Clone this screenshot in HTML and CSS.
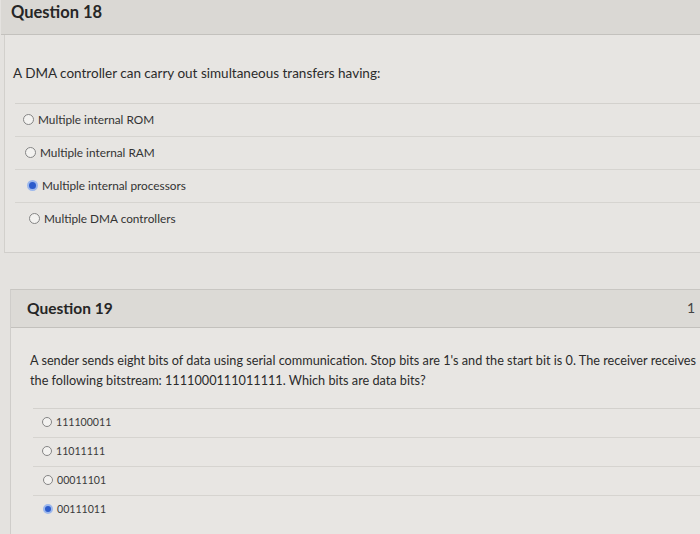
FILE: index.html
```html
<!DOCTYPE html>
<html>
<head>
<meta charset="utf-8">
<link rel="stylesheet" href="styles.css">
</head>
<body>
<div class="page">
  <section class="q q18">
    <div class="q-head"><h2 class="q-title">Question 18</h2></div>
    <div class="q-body">
      <p class="q-text">A DMA controller can carry out simultaneous transfers having:</p>
      <ul class="answers a18">
        <li class="ans"><span class="radio"></span><span>Multiple internal ROM</span></li>
        <li class="ans shift1"><span class="radio"></span><span>Multiple internal RAM</span></li>
        <li class="ans shift2"><span class="radio on"></span><span>Multiple internal processors</span></li>
        <li class="ans shift3"><span class="radio"></span><span>Multiple DMA controllers</span></li>
      </ul>
    </div>
  </section>

  <section class="q q19">
    <div class="q-head head19"><h2 class="q-title">Question 19</h2><span class="pts">1</span></div>
    <div class="q-body body19">
      <p class="q-text t19">A sender sends eight bits of data using serial communication. Stop bits are 1's and the start bit is 0. The receiver receives<br>the following bitstream: 1111000111011111. Which bits are data bits?</p>
      <ul class="answers a19">
        <li class="ans s"><span class="radio sm"></span><span>111100011</span></li>
        <li class="ans s"><span class="radio sm"></span><span>11011111</span></li>
        <li class="ans s shift1"><span class="radio sm"></span><span>00011101</span></li>
        <li class="ans s shift1"><span class="radio sm on"></span><span>00111011</span></li>
      </ul>
    </div>
  </section>
</div>
</body>
</html>
```

FILE: styles.css
```css
html, body {
  margin: 0;
  padding: 0;
}
body {
  width: 700px;
  height: 534px;
  overflow: hidden;
  background: #e4e2df;
  font-family: Lato, "Noto Sans", sans-serif;
  color: #2d2d2d;
}
.page {
  display: flex;
  flex-direction: column;
}
.q18 {
  border-left: 1px solid #d2d0cc;
  margin-left: 4px;
  border-bottom: 1px solid #d0cecb;
  height: 253px;
  box-sizing: border-box;
}
.q-head {
  display: flex;
  align-items: flex-start;
  justify-content: space-between;
  background: #dad8d4;
  border-bottom: 1px solid #c3c1bd;
  height: 35px;
  box-sizing: border-box;
  margin-left: -4px;
  padding: 2px 0 0 10px;
}
.q-title {
  margin: 0;
  font-size: 16.5px;
  line-height: 20px;
  font-weight: 700;
  color: #262626;
}
.q-body {
  background: #e7e5e2;
  height: 217px;
}
.q-text {
  margin: 0;
  padding: 28px 0 0 8px;
  font-size: 13.5px;
  line-height: 20px;
  color: #2b2b2b;
}
.answers {
  list-style: none;
  margin: 0;
  padding: 0;
}
.a18 {
  margin-top: 20px;
  margin-left: 10px;
  border-top: 1px solid #d3d1cd;
}
.ans {
  display: flex;
  align-items: center;
  gap: 4px;
  height: 33px;
  border-bottom: 1px solid #d6d4d0;
  box-sizing: border-box;
  padding: 0 0 2px 8px;
  font-size: 11.8px;
  color: #333;
}
.ans:last-child {
  border-bottom: none;
}
.shift1 { padding-left: 10px; }
.shift2 { padding-left: 12px; }
.shift3 { padding-left: 14px; }
.radio {
  width: 11px;
  height: 11px;
  border-radius: 50%;
  border: 1px solid #858585;
  background: #f3f2f0;
  flex: none;
  box-sizing: border-box;
}
.radio.on {
  border: 2px solid #9db8ec;
  background: #2c5ccc;
}
.q19 {
  margin-top: 36px;
  margin-left: 10px;
  border-left: 1px solid #cfcdca;
  border-top: 1px solid #c8c6c2;
}
.head19 {
  margin-left: 0;
  height: 38px;
  align-items: center;
  padding: 0 5px 2px 16px;
  background: #dcdad6;
}
.head19 .q-title {
  font-size: 15.5px;
}
.pts {
  font-size: 14px;
  color: #444;
}
.body19 {
  height: 210px;
  background: #e8e6e3;
}
.t19 {
  padding: 22px 0 0 19px;
  font-size: 12.7px;
  line-height: 20px;
  white-space: nowrap;
}
.a19 {
  margin-top: 18px;
  margin-left: 22px;
  border-top: 1px solid #d3d1cd;
}
.ans.s {
  height: 29px;
  font-size: 10.6px;
  color: #3a3a3a;
  padding: 0 0 3px 9px;
  gap: 4px;
}
.ans.s.shift1 { padding-left: 10px; }
.radio.sm {
  width: 10px;
  height: 10px;
}
```
